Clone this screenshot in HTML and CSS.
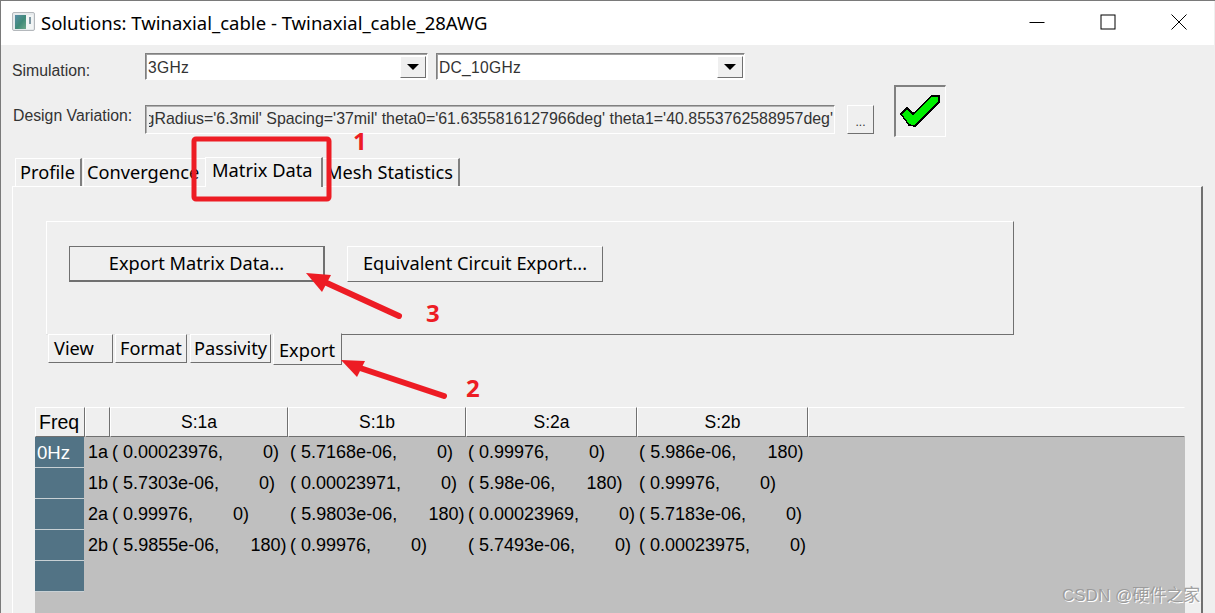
FILE: index.html
```html
<!DOCTYPE html>
<html lang="en">
<head>
<meta charset="utf-8">
<title>Solutions: Twinaxial_cable - Twinaxial_cable_28AWG</title>
<link rel="stylesheet" href="styles.css">
</head>
<body>
<div class="window">
  <header class="titlebar">
    <svg class="app-icon" width="24" height="20" viewBox="0 0 24 20">
      <defs>
        <linearGradient id="ig" x1="0" y1="0" x2="1" y2="1">
          <stop offset="0" stop-color="#5a8ea8"/>
          <stop offset=".55" stop-color="#3f8a78"/>
          <stop offset="1" stop-color="#6fa88c"/>
        </linearGradient>
      </defs>
      <rect x="0.5" y="0.5" width="22" height="18" rx="1.5" fill="#e6eaec" stroke="#b4b8bc"/>
      <rect x="3" y="3" width="11" height="14" fill="url(#ig)"/>
      <rect x="14" y="3" width="7" height="14" fill="#f2f5f5"/>
      <rect x="17" y="5" width="2" height="7" fill="#7e98a4"/>
    </svg>
    <div class="title">Solutions: Twinaxial_cable - Twinaxial_cable_28AWG</div>
    <div class="caption">
      <svg width="16" height="16" viewBox="0 0 16 16"><path d="M0.5 8.5H15.5" stroke="#000" fill="none"/></svg>
      <svg width="16" height="16" viewBox="0 0 16 16"><rect x="1" y="1" width="14" height="14" stroke="#000" fill="none"/></svg>
      <svg width="16" height="16" viewBox="0 0 16 16"><path d="M0.5 0.5L15.5 15.5M15.5 0.5L0.5 15.5" stroke="#000" fill="none"/></svg>
    </div>
  </header>

  <section class="client">
    <div class="row-sim">
      <span class="label label-sim">Simulation:</span>
      <div class="combo combo-a"><span class="combo-text">3GHz</span><span class="combo-btn"><i class="tri"></i></span></div>
      <div class="combo combo-b"><span class="combo-text">DC_10GHz</span><span class="combo-btn"><i class="tri"></i></span></div>
    </div>
    <div class="row-var">
      <span class="label label-var">Design Variation:</span>
      <div class="variation"><div class="var-clip"><span>gRadius='6.3mil' Spacing='37mil' theta0='61.6355816127966deg' theta1='40.8553762588957deg'</span></div></div>
      <div class="dots">...</div>
      <div class="check">
        <svg width="51" height="51" viewBox="0 0 51 51" shape-rendering="crispEdges">
          <polygon points="7,29 13,23 19,29 38,11 45,11 45,17 21,41 15,40" fill="#00f000" stroke="#000" stroke-width="1.5"/>
        </svg>
      </div>
    </div>

    <nav class="tabs">
      <div class="tab tab-profile">Profile</div>
      <div class="tab tab-conv">Convergence</div>
      <div class="tab tab-matrix">Matrix Data</div>
      <div class="tab tab-mesh">Mesh Statistics</div>
    </nav>

    <div class="panel">
      <div class="group">
        <div class="btn btn-default">Export Matrix Data...</div>
        <div class="btn">Equivalent Circuit Export...</div>
      </div>
      <div class="subtabs">
        <div class="subtab st-view">View</div>
        <div class="subtab st-format">Format</div>
        <div class="subtab st-pass">Passivity</div>
        <div class="subtab st-export">Export</div>
      </div>

      <div class="grid">
        <div class="hd hd-freq">Freq</div>
        <div class="hd"></div>
        <div class="hd hd-c">S:1a</div>
        <div class="hd hd-c">S:1b</div>
        <div class="hd hd-c">S:2a</div>
        <div class="hd hd-c">S:2b</div>
        <div class="hd hd-last"></div>

        <div class="fr">0Hz</div><div class="rl">1a</div>
        <div class="c">( 0.00023976,        0)</div><div class="c">( 5.7168e-06,        0)</div><div class="c">( 0.99976,        0)</div><div class="c wide">( 5.986e-06,      180)</div><div class="c"></div>

        <div class="fr"></div><div class="rl">1b</div>
        <div class="c">( 5.7303e-06,        0)</div><div class="c">( 0.00023971,        0)</div><div class="c wide">( 5.98e-06,      180)</div><div class="c">( 0.99976,        0)</div><div class="c"></div>

        <div class="fr"></div><div class="rl">2a</div>
        <div class="c">( 0.99976,        0)</div><div class="c wide">( 5.9803e-06,      180)</div><div class="c">( 0.00023969,        0)</div><div class="c">( 5.7183e-06,        0)</div><div class="c"></div>

        <div class="fr"></div><div class="rl">2b</div>
        <div class="c wide">( 5.9855e-06,      180)</div><div class="c">( 0.99976,        0)</div><div class="c">( 5.7493e-06,        0)</div><div class="c">( 0.00023975,        0)</div><div class="c"></div>

        <div class="fr"></div><div class="rl"></div>
        <div class="c"></div><div class="c"></div><div class="c"></div><div class="c"></div><div class="c"></div>
      </div>
    </div>
  </section>

  <svg class="marks" width="1215" height="613" viewBox="0 0 1215 613">
    <rect x="194" y="139" width="135" height="60" rx="2" fill="none" stroke="#ed1c24" stroke-width="5"/>
    <path d="M399 316L318 279" stroke="#ed1c24" stroke-width="6" stroke-linecap="round" fill="none"/>
    <polygon points="306,273 331,275 322,292" fill="#ed1c24"/>
    <path d="M444 396L354 366" stroke="#ed1c24" stroke-width="6" stroke-linecap="round" fill="none"/>
    <polygon points="341,360 365,361 357,377" fill="#ed1c24"/>
  </svg>
  <span class="num num-1">1</span>
  <span class="num num-2">2</span>
  <span class="num num-3">3</span>
  <span class="watermark">CSDN @硬件之家</span>
</div>
</body>
</html>
```
FILE: styles.css
```css
* { box-sizing: border-box; }
html, body { margin: 0; padding: 0; height: 613px; overflow: hidden; background: #efefef; }
.window {
  position: relative;
  width: 1215px;
  height: 613px;
  overflow: hidden;
  background: #efefef;
  border-top: 1px solid #7a7a7a;
  border-left: 1px solid #7a7a7a;
  font-family: "Liberation Sans", Arial, sans-serif;
  color: #000;
}
.titlebar {
  display: flex;
  align-items: center;
  height: 44px;
  background: #fff;
  padding: 0 0 2px 11px;
  margin-right: 1px;
}
.app-icon { margin-right: 5px; flex: none; }
.title {
  font-family: "Noto Sans", sans-serif;
  font-size: 18.5px;
  color: #000;
  white-space: nowrap;
}
.caption {
  margin-left: auto;
  display: flex;
  gap: 55px;
  padding-right: 27px;
}
.client { padding: 8px 0 0 0; }
.label { font-size: 15.8px; color: #333; }
.row-sim {
  display: flex;
  align-items: flex-start;
  height: 27px;
}
.label-sim { width: 144px; padding: 9px 0 0 11px; }
.combo {
  display: flex;
  height: 27px;
  background: #fff;
  border: 1px solid;
  border-color: #808080 #fff #fff #808080;
  box-shadow: inset 1px 1px 0 #a0a0a0;
  padding: 2px 1px 1px 2px;
}
.combo-a { width: 283px; margin-right: 8px; }
.combo-b { width: 309px; }
.combo-text { flex: 1; font-size: 15.6px; letter-spacing: .3px; color: #333; padding-top: 3px; }
.combo-btn {
  width: 26px;
  height: 22px;
  background: #efefef;
  border: 1px solid;
  border-color: #fff #707070 #707070 #fff;
  display: flex;
  align-items: center;
  justify-content: center;
}
.tri {
  width: 0; height: 0;
  border-left: 6px solid transparent;
  border-right: 6px solid transparent;
  border-top: 6px solid #000;
}
.row-var {
  display: flex;
  align-items: flex-start;
  height: 51px;
  margin-top: 5px;
}
.label-var { width: 144px; padding: 22px 0 0 12px; }
.variation {
  margin-top: 20px;
  width: 690px;
  height: 29px;
  background: #efefef;
  border: 1px solid;
  border-color: #808080 #fff #fff #808080;
  box-shadow: inset 1px 1px 0 #b0b0b0;
  font-size: 15.93px;
  color: #333;
  padding: 4px 1px 0 3px;
}
.var-clip {
  display: flex;
  justify-content: flex-end;
  overflow: hidden;
  white-space: nowrap;
}
.dots {
  margin: 20px 0 0 12px;
  width: 27px;
  height: 29px;
  border: 1px solid;
  border-color: #fff #707070 #707070 #fff;
  font-size: 12px;
  text-align: center;
  padding-top: 9px;
  color: #333;
}
.check {
  margin-left: 20px;
  width: 52px;
  height: 52px;
  border-style: solid;
  border-width: 2px 1px 1px 2px;
  border-color: #808080 #fff #fff #808080;
}
.check svg { display: block; margin: -2px; }
.tabs {
  position: relative;
  display: flex;
  height: 30px;
  margin-top: 20px;
  padding-left: 14px;
  align-items: flex-end;
  z-index: 1;
}
.tab {
  font-family: "Noto Sans", sans-serif;
  font-size: 18.2px;
  height: 28px;
  line-height: 26px;
  background: #efefef;
  border-top: 1px solid #fff;
  border-left: 1px solid #fff;
  border-right: 2px solid #808080;
  white-space: nowrap;
  overflow: hidden;
  color: #000;
}
.tab-profile { width: 67px; padding-left: 4px; margin-right: 1px; }
.tab-conv { width: 122px; padding-left: 3px; border-right: 0; }
.tab-matrix {
  width: 118px;
  height: 30px;
  padding-left: 6px;
  font-size: 18.3px;
  line-height: 24px;
  margin-bottom: -1px;
  position: relative;
  z-index: 1;
}
.tab-mesh { width: 137px; padding-left: 3px; border-left: 0; }
.panel {
  margin-left: 11px;
  width: 1191px;
  height: 430px;
  border-top: 1px solid #fff;
  border-left: 1px solid #fff;
  border-right: 2px solid #707070;
  padding: 34px 0 0 33px;
}
.group {
  width: 968px;
  height: 114px;
  border: 1px solid;
  border-color: #fff #707070 #707070 #fff;
  padding: 24px 0 0 22px;
  display: flex;
  gap: 22px;
  align-items: flex-start;
}
.btn {
  width: 256px;
  height: 36px;
  border: 1px solid;
  border-color: #fff #707070 #707070 #fff;
  font-family: "Noto Sans", sans-serif;
  font-size: 18.2px;
  line-height: 32px;
  text-align: center;
  color: #000;
}
.btn-default {
  border-color: #707070;
  border-width: 1px 2px 2px 1px;
}
.subtabs {
  position: relative;
  display: flex;
  height: 31px;
  margin-top: -1px;
  margin-left: 2px;
  align-items: flex-start;
}
.subtabs::before {
  content: "";
  position: absolute;
  left: -2px;
  top: 0;
  width: 295px;
  height: 1px;
  background: #e4e4e4;
}
.subtab {
  position: relative;
  font-family: "Noto Sans", sans-serif;
  font-size: 18.2px;
  height: 29px;
  line-height: 27px;
  background: #efefef;
  border: 1px solid;
  border-color: #fff #707070 #707070 #fff;
  padding-left: 5px;
  white-space: nowrap;
  color: #000;
}
.st-view { width: 65px; margin-right: 2px; }
.st-format { width: 72px; margin-right: 3px; padding-left: 4px; }
.st-pass { width: 81px; margin-right: 2px; padding-left: 3px; }
.st-export {
  width: 69px;
  height: 32px;
  padding-left: 5px;
  line-height: 33px;
  border-top-color: #efefef;
  margin-top: -1px;
}
.grid {
  display: grid;
  margin: 42px 0 0 -11px;
  width: 1150px;
  grid-template-columns: 50px 25px 178px 178px 171px 171px 1fr;
  grid-template-rows: 30px repeat(5, 31px) 40px;
  background: #bfbfbf;
  font-size: 18px;
  color: #000;
}
.hd {
  background: #efefef;
  border: 1px solid;
  border-color: #fff #707070 #707070 #fff;
  font-size: 17.5px;
  line-height: 28px;
}
.hd-freq { padding-left: 3px; font-size: 19.5px; }
.hd-c { text-align: center; }
.hd-last { border-right-color: #efefef; }
.fr {
  background: #527385;
  border-bottom: 1px solid #c8d0d4;
  color: #fff;
  padding-left: 2px;
  font-size: 18.6px;
  line-height: 31px;
  margin-right: 1px;
}
.rl { line-height: 31px; padding-left: 3px; }
.c { white-space: pre; line-height: 31px; padding-left: 2px; overflow: visible; }
.wide { word-spacing: .2px; }
.marks { position: absolute; left: -1px; top: -1px; pointer-events: none; z-index: 2; }
.num {
  position: absolute;
  z-index: 3;
  font-family: "Noto Sans", sans-serif;
  font-weight: 700;
  font-size: 24px;
  line-height: 24px;
  color: #ed1c24;
}
.num-1 { left: 352px; top: 128px; }
.num-2 { left: 465px; top: 375px; }
.num-3 { left: 425px; top: 300px; }
.watermark {
  position: absolute;
  z-index: 3;
  left: 1061px;
  top: 580px;
  font-family: "Liberation Sans", "Noto Sans CJK SC", sans-serif;
  font-size: 17px;
  color: rgba(150,150,150,.9);
  text-shadow: 1px 1px 0 #fff;
  white-space: nowrap;
}
```
